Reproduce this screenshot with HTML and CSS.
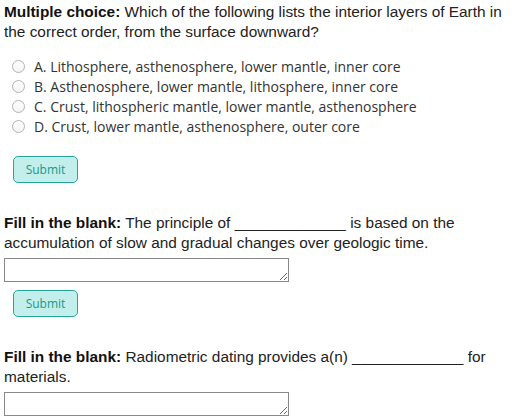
FILE: index.html
```html
<!DOCTYPE html>
<html lang="en">
<head>
    <meta charset="UTF-8">
    <meta name="viewport" content="width=device-width, initial-scale=1.0">
    <title>Earth Layers Quiz</title>
    <link rel="stylesheet" href="styles.css">
</head>
<body>
    <div class="question">
        <p class="prompt"><strong>Multiple choice:</strong> Which of the following lists the interior layers of Earth in the correct order, from the surface downward?</p>
        <div class="choices">
            <label class="choice"><input type="radio" name="q1"> A. Lithosphere, asthenosphere, lower mantle, inner core</label>
            <label class="choice"><input type="radio" name="q1"> B. Asthenosphere, lower mantle, lithosphere, inner core</label>
            <label class="choice"><input type="radio" name="q1"> C. Crust, lithospheric mantle, lower mantle, asthenosphere</label>
            <label class="choice"><input type="radio" name="q1"> D. Crust, lower mantle, asthenosphere, outer core</label>
        </div>
        <button class="submit">Submit</button>
    </div>

    <div class="question">
        <p class="prompt"><strong>Fill in the blank:</strong> The principle of _____________ is based on the accumulation of slow and gradual changes over geologic time.</p>
        <textarea class="answer"></textarea>
        <button class="submit">Submit</button>
    </div>

    <div class="question">
        <p class="prompt"><strong>Fill in the blank:</strong> Radiometric dating provides a(n) _____________ for materials.</p>
        <textarea class="answer"></textarea>
    </div>
</body>
</html>
```

FILE: styles.css
```css
body {
    margin: 0;
    padding: 2px 4px;
    background-color: #fff;
    color: #222;
    font-family: 'Liberation Sans', Arial, sans-serif;
    font-size: 15.4px;
}
.question {
    margin-bottom: 30px;
}
.question:last-child {
    margin-bottom: 0;
}
.prompt {
    margin: 0;
    line-height: 20px;
}
.prompt strong {
    color: #111;
}
.choices {
    margin: 14px 0 20px;
    font-family: 'Open Sans', sans-serif;
    font-size: 14px;
    color: #333;
}
.choice {
    display: flex;
    align-items: center;
    height: 20px;
}
.choice input {
    appearance: none;
    box-sizing: border-box;
    width: 13px;
    height: 13px;
    margin: 0 9px 0 8px;
    border: 1px solid #b3b3b3;
    border-radius: 50%;
    background: linear-gradient(#fff, #f3f3f3);
}
.submit {
    display: block;
    margin-left: 9px;
    width: 65px;
    height: 27px;
    padding: 0;
    background-color: #c2efeb;
    border: 1px solid #26a69a;
    border-radius: 5px;
    color: #16998d;
    font-family: 'Open Sans', sans-serif;
    font-size: 12px;
}
.answer {
    display: block;
    box-sizing: border-box;
    width: 285px;
    height: 24px;
    margin: 5px 0 8px;
    padding: 2px;
    border: 1px solid #888;
    resize: both;
}
```
